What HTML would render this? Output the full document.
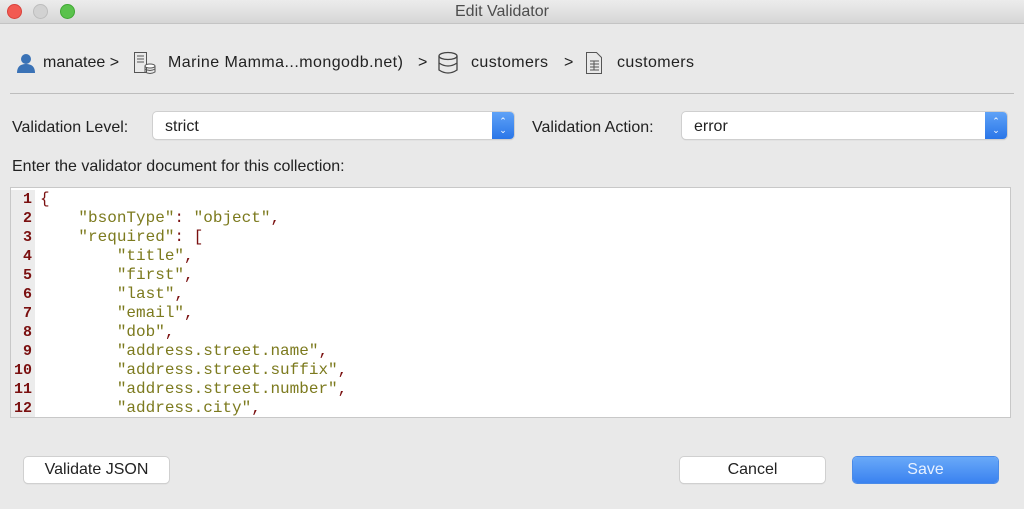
<!DOCTYPE html>
<html><head><meta charset="utf-8"><style>
*{margin:0;padding:0;box-sizing:border-box}
body{width:1024px;height:509px;background:#e9e9e9;font-family:"Liberation Sans",sans-serif;position:relative;overflow:hidden;color:#222}
.abs{position:absolute}
.tb{left:0;top:0;width:1024px;height:24px;background:linear-gradient(#ececec,#d6d6d6);border-bottom:1px solid #c4c4c4}
.dot{width:15px;height:15px;border-radius:50%;top:4px}
.t{font-size:16px;white-space:nowrap}
.sel{background:#fff;border-radius:4px;box-shadow:0 0 0 1px #cfcfcf,0 1px 1px #bbb;height:27px}
.sel span{position:absolute;left:12px;top:6px;font-size:16px}
.arr{position:absolute;right:0;top:0;width:22px;height:27px;background:linear-gradient(#5fa2f7,#2a76e8);border-radius:0 4px 4px 0;color:#fff;font-size:9px;text-align:center;line-height:9px;padding-top:5px}
.btn{background:#fff;border-radius:4px;box-shadow:0 0 0 1px #d0d0d0,0 1px 1px #b8b8b8;height:26px;text-align:center;font-size:16px;line-height:26px}
.code{font-family:"Liberation Mono",monospace;font-size:16px;line-height:19px;white-space:pre}
.s{color:#7c7a1e}.p{color:#7a1010}
</style></head><body>
<div class="abs tb"></div>
<div class="abs dot" style="left:7px;background:#f25a52;border:1px solid #d8423b"></div>
<div class="abs dot" style="left:33px;background:#d2d2d2;border:1px solid #bdbdbd"></div>
<div class="abs dot" style="left:60px;background:#5ac24c;border:1px solid #3fa833"></div>
<div class="abs t" style="left:455px;top:3px;color:#4d4d4d">Edit Validator</div>

<svg class="abs" style="left:15px;top:52px" width="22" height="22"><circle cx="11" cy="7" r="5" fill="#3a72b6"/><path d="M2 21 Q2 12 11 12 Q20 12 20 21Z" fill="#3a72b6"/></svg>
<div class="abs t" style="left:43px;top:54px">manatee &gt;</div>
<svg class="abs" style="left:133px;top:51px" width="24" height="24" fill="none" stroke="#555" stroke-width="1"><rect x="1.5" y="1.5" width="12" height="20"/><path d="M4 5h7M4 8h7M4 11h7"/><ellipse cx="17" cy="15" rx="5" ry="2" fill="#fff"/><path d="M12 15v6q5 3 10 0v-6M12 18q5 3 10 0"/></svg>
<div class="abs t" style="left:168px;top:54px;letter-spacing:0.45px">Marine Mamma...mongodb.net)</div>
<div class="abs t" style="left:418px;top:54px">&gt;</div>
<svg class="abs" style="left:436px;top:51px" width="24" height="24" fill="none" stroke="#444" stroke-width="1.3"><ellipse cx="12" cy="5" rx="9" ry="3.5"/><path d="M3 5v14q9 6 18 0V5M3 12q9 6 18 0"/></svg>
<div class="abs t" style="left:471px;top:54px;letter-spacing:0.4px">customers</div>
<div class="abs t" style="left:564px;top:54px">&gt;</div>
<svg class="abs" style="left:584px;top:51px" width="22" height="24" fill="none" stroke="#555" stroke-width="1"><path d="M2.5 1.5h10l5 5v16h-15z"/><path d="M6 10h9M6 13h9M6 16h9M6 19h9M10 10v9"/></svg>
<div class="abs t" style="left:617px;top:54px;letter-spacing:0.4px">customers</div>

<div class="abs" style="left:10px;top:93px;width:1004px;height:1px;background:#bdbdbd"></div>

<div class="abs t" style="left:12px;top:119px">Validation Level:</div>
<div class="abs sel" style="left:153px;top:112px;width:361px"><span>strict</span><div class="arr">&#8963;<br>&#8964;</div></div>
<div class="abs t" style="left:532px;top:119px">Validation Action:</div>
<div class="abs sel" style="left:682px;top:112px;width:325px"><span>error</span><div class="arr">&#8963;<br>&#8964;</div></div>

<div class="abs t" style="left:12px;top:158px">Enter the validator document for this collection:</div>

<div class="abs" style="left:10px;top:187px;width:1001px;height:231px;background:#fff;border:1px solid #c8c8c8;overflow:hidden">
<div class="abs code p" style="left:0;top:2px;width:24px;height:231px;background:#ececec;text-align:right;padding-right:3px;font-size:15px;font-weight:bold">1
2
3
4
5
6
7
8
9
10
11
12</div>
<div class="abs code" style="left:29px;top:2px"><span class="p">{</span>
    <span class="s">"bsonType"</span><span class="p">:</span> <span class="s">"object"</span><span class="p">,</span>
    <span class="s">"required"</span><span class="p">: [</span>
        <span class="s">"title"</span><span class="p">,</span>
        <span class="s">"first"</span><span class="p">,</span>
        <span class="s">"last"</span><span class="p">,</span>
        <span class="s">"email"</span><span class="p">,</span>
        <span class="s">"dob"</span><span class="p">,</span>
        <span class="s">"address.street.name"</span><span class="p">,</span>
        <span class="s">"address.street.suffix"</span><span class="p">,</span>
        <span class="s">"address.street.number"</span><span class="p">,</span>
        <span class="s">"address.city"</span><span class="p">,</span></div>
</div>

<div class="abs btn" style="left:24px;top:457px;width:145px">Validate JSON</div>
<div class="abs btn" style="left:680px;top:457px;width:145px">Cancel</div>
<div class="abs btn" style="left:853px;top:457px;width:145px;background:linear-gradient(#69a9f8,#3a82f0);color:#e8f1ff;box-shadow:0 0 0 1px #4a8be8">Save</div>
</body></html>
